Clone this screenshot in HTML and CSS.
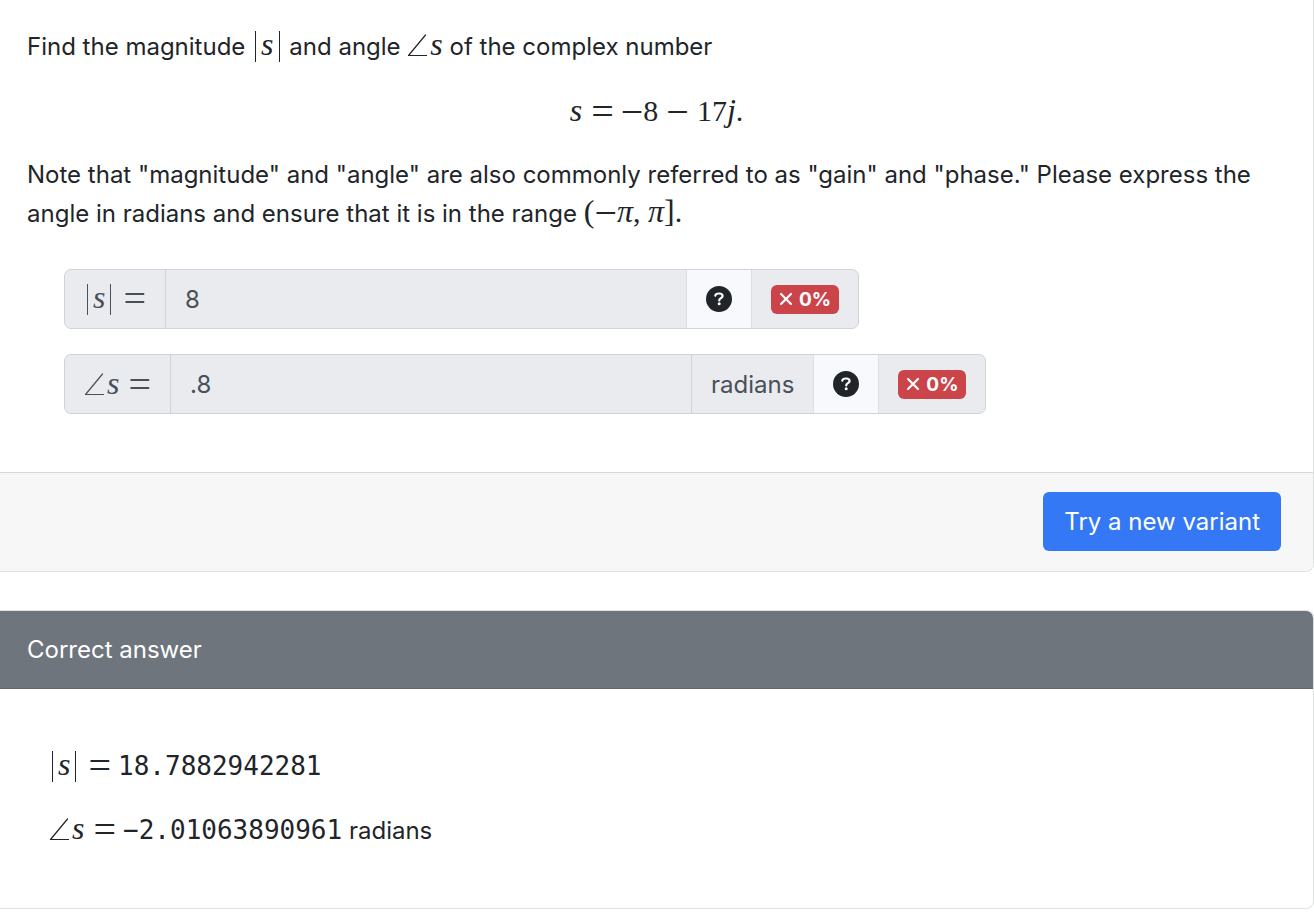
FILE: index.html
```html
<!DOCTYPE html>
<html lang="en">
<head>
  <meta charset="UTF-8">
  <meta name="viewport" content="width=device-width, initial-scale=1.0">
  <title>Complex number</title>
  <link rel="stylesheet" href="styles.css">
</head>
<body>
  <svg class="sprite" aria-hidden="true">
    <symbol id="angle" viewBox="0 0 20 24">
      <path d="M18.5 2L1.5 22.5H20" fill="none" stroke="currentColor" stroke-width="1.2" stroke-linecap="round" stroke-linejoin="round"/>
    </symbol>
    <symbol id="question" viewBox="0 0 26 26">
      <circle cx="13" cy="13" r="13" fill="currentColor"/>
      <path d="M9.3 9.6C9.5 8.2 10.5 7.5 13 7.5C15.3 7.5 16.6 8.4 16.6 10C16.6 12.2 13.2 12.2 13.2 14.4" fill="none" stroke="#fff" stroke-width="2.2" stroke-linecap="round"/>
      <circle cx="13.2" cy="17.8" r="1.5" fill="#fff"/>
    </symbol>
    <symbol id="cross" viewBox="0 0 14 14">
      <path d="M2 2L12 12M12 2L2 12" fill="none" stroke="currentColor" stroke-width="2.2" stroke-linecap="round"/>
    </symbol>
  </svg>

  <form class="card question">
    <div class="card-body">
      <p>Find the magnitude <span class="math"><span class="abs"><i>s</i></span></span> and angle <span class="math"><svg class="angle"><use href="#angle"/></svg><i>s</i></span> of the complex number</p>
      <p class="math display"><i>s</i><span class="rel">=</span><span class="neg">−</span>8<span class="op">−</span>17<i>j</i>.</p>
      <p>Note that "magnitude" and "angle" are also commonly referred to as "gain" and "phase." Please express the angle in radians and ensure that it is in the range <span class="math"><span class="fence">(</span><span class="neg">−</span><i>π</i>, <i>π</i><span class="fence">]</span>.</span></p>

      <div class="input-group">
        <label class="addon" for="magnitude"><span class="math"><span class="abs"><i>s</i></span><span class="rel">=</span></span></label>
        <input type="text" id="magnitude" value="8" disabled>
        <button type="button" class="help" aria-label="Help"><svg><use href="#question"/></svg></button>
        <span class="addon"><span class="badge"><svg><use href="#cross"/></svg>0%</span></span>
      </div>
      <div class="input-group">
        <label class="addon" for="phase"><span class="math"><svg class="angle"><use href="#angle"/></svg><i>s</i><span class="rel">=</span></span></label>
        <input type="text" id="phase" value=".8" disabled>
        <span class="addon">radians</span>
        <button type="button" class="help" aria-label="Help"><svg><use href="#question"/></svg></button>
        <span class="addon"><span class="badge"><svg><use href="#cross"/></svg>0%</span></span>
      </div>
    </div>
    <div class="card-footer">
      <button type="button" class="btn">Try a new variant</button>
    </div>
  </form>

  <div class="card answer">
    <h2 class="card-header">Correct answer</h2>
    <div class="card-body">
      <p><span class="math"><span class="abs"><i>s</i></span><span class="rel">=</span></span><code>18.7882942281</code></p>
      <p><span class="math"><svg class="angle"><use href="#angle"/></svg><i>s</i><span class="rel">=</span></span><code>−2.01063890961</code> radians</p>
    </div>
  </div>
</body>
</html>
```
FILE: styles.css
```css
* {
  box-sizing: border-box;
}

body {
  margin: 0;
  background-color: #fff;
  color: #212529;
  font-family: Inter, "Liberation Sans", sans-serif;
  font-size: 24px;
  line-height: 39px;
}

p {
  margin: 0 0 25px;
}

.sprite {
  display: none;
}

.card {
  border: 1px solid #dee0e2;
  border-left: 0;
  border-radius: 0 8px 8px 0;
}

.question {
  margin-bottom: 38px;
  border-top: 0;
  border-top-right-radius: 0;
}

.question .card-body {
  padding: 27px 27px 58px;
}

/* math */
.math {
  font-family: "Liberation Serif", serif;
  font-size: 30px;
  line-height: 30px;
  white-space: nowrap;
}

.math i {
  font-size: 32px;
}

.display {
  line-height: 39px;
  text-align: center;
}

.abs {
  display: inline-block;
  margin: 0 3px;
  padding: 0 5px 4px;
  border: solid;
  border-width: 0 1px;
  line-height: 26px;
}

.rel,
.op,
.neg {
  font-size: 40px;
  line-height: 30px;
  vertical-align: -4px;
}

.rel {
  margin: 0 7px 0 9px;
}

.op {
  margin: 0 8px;
}

.addon .rel {
  margin-right: 0;
}

.fence {
  font-size: 32px;
}

.angle {
  width: 20px;
  height: 24px;
  margin-right: 3px;
  vertical-align: -2px;
}

/* answer inputs */
.input-group {
  display: flex;
  width: fit-content;
  height: 60px;
  margin: 0 37px 25px;
  border: 1px solid #ced4da;
  border-radius: 7px;
  background-color: #e9ebef;
  color: #495057;
  overflow: hidden;
}

.card-body p + .input-group {
  margin-top: 36px;
}

.input-group:last-child {
  margin-bottom: 0;
}

.addon {
  display: flex;
  align-items: center;
  padding: 0 19px;
}

.input-group input {
  width: 521px;
  min-width: 0;
  padding: 0 19px;
  border: solid #ced4da;
  border-width: 0 0 0 1px;
  background-color: #e9ebef;
  color: #495057;
  font: inherit;
}

input + .addon {
  border-left: 1px solid #ced4da;
}

.help {
  display: flex;
  align-items: center;
  justify-content: center;
  width: 66px;
  padding: 0;
  border: solid #dbdfe4;
  border-width: 0 1px;
  background-color: #f8f9fc;
  color: #212529;
}

.help svg {
  width: 26px;
  height: 26px;
}

.badge {
  display: flex;
  align-items: center;
  gap: 6px;
  height: 29px;
  padding: 0 8px;
  border-radius: 6px;
  background-color: #cb444a;
  color: #fff;
  font-size: 19px;
  font-weight: 700;
}

.badge svg {
  width: 14px;
  height: 14px;
}

.card-footer {
  display: flex;
  justify-content: flex-end;
  padding: 19px 32px 20px;
  border-top: 1px solid #d9d9d9;
  border-bottom-right-radius: 8px;
  background-color: #f7f7f7;
}

.btn {
  height: 59px;
  padding: 0 21px;
  border: 0;
  border-radius: 6px;
  background-color: #3478f6;
  color: #fff;
  font: inherit;
}

.card-header {
  margin: 0;
  padding: 19px 27px;
  border-bottom: 1px solid #5f666d;
  border-top-right-radius: 7px;
  background-color: #6e757c;
  color: #fff;
  font-size: 24px;
  font-weight: 400;
}

.answer .card-body {
  padding: 58px 49px 33px;
}

code {
  font-family: "DejaVu Sans Mono", monospace;
  font-size: 26px;
}
```
